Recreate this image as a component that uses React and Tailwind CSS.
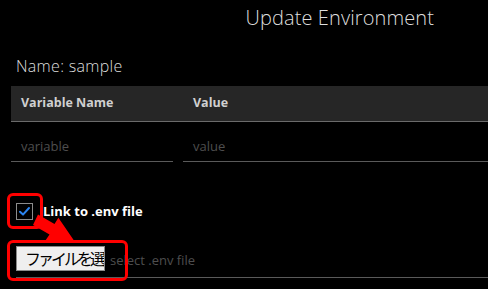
export default function App() {
  return (
    <div className="relative w-[488px] h-[289px] overflow-hidden bg-black text-[#dedede] font-['Open_Sans','Noto_Sans_CJK_JP',sans-serif]">
      <div className="flex flex-col">
        <div className="flex justify-end pr-[54px] pt-[4px] h-[32px]">
          <div className="text-[20px] leading-[28px] font-light tracking-[0.1px]">Update Environment</div>
        </div>
        <div className="pl-[16px] mt-[23px] text-[16px] leading-[22px] font-light tracking-[0.3px]">Name: sample</div>
        <div className="ml-[11px] mt-[9px] h-[36px] bg-[#262626] border-b border-[#6a6a6a] flex items-center text-[12.5px] font-bold text-[#d0d0d0]">
          <div className="w-[172px] pl-[10px]">Variable Name</div>
          <div className="pl-[10px]">Value</div>
        </div>
        <div className="ml-[11px] mt-[11px] flex gap-[10px]">
          <div className="w-[162px] h-[29px] border-b border-[#5a5a5a] pl-[10px] flex items-center text-[13px] text-[#4e4e4e]">variable</div>
          <div className="flex-1 h-[29px] border-b border-[#5a5a5a] pl-[10px] flex items-center text-[13px] text-[#4e4e4e]">value</div>
        </div>
        <div className="ml-[16px] mt-[40px] flex items-center gap-[10px]">
          <div className="w-[17px] h-[17px] border border-[#8c8c8c] bg-black flex items-center justify-center">
            <svg width="13" height="13" viewBox="0 0 13 13">
              <path d="M2 6.8 L5 9.6 L11 3" fill="none" stroke="#2b84f0" strokeWidth="2" strokeLinecap="round" strokeLinejoin="round" />
            </svg>
          </div>
          <div className="text-[13px] font-bold text-white leading-[18px]">Link to .env file</div>
        </div>
        <div className="ml-[16px] mt-[26px] pb-[6px] border-b border-[#5a5a5a] flex items-center">
          <div className="w-[89px] h-[25px] overflow-hidden whitespace-nowrap bg-[#efefef] border border-[#8a8a8a] text-black text-[16px] leading-[23px] pl-[8px] tracking-[-3px] font-['Noto_Sans_CJK_JP',sans-serif]">ファイルを選択</div>
          <div className="ml-[5px] text-[13px] text-[#4e4e4e] mt-[4px]">select .env file</div>
        </div>
      </div>
      <div className="absolute left-[7px] top-[193px] w-[36px] h-[36px] border-[3px] border-[#ff0000] rounded-[6px]" />
      <div className="absolute left-[7px] top-[240px] w-[121px] h-[41px] border-[3px] border-[#ff0000] rounded-[6px]" />
      <svg className="absolute left-0 top-0" width="488" height="289" viewBox="0 0 488 289">
        <polygon points="38,214.5 54.5,224 58.4,217.7 75,242 45.6,240.3 49.5,234.5 33,225" fill="#ff0000" />
      </svg>
    </div>
  );
}
